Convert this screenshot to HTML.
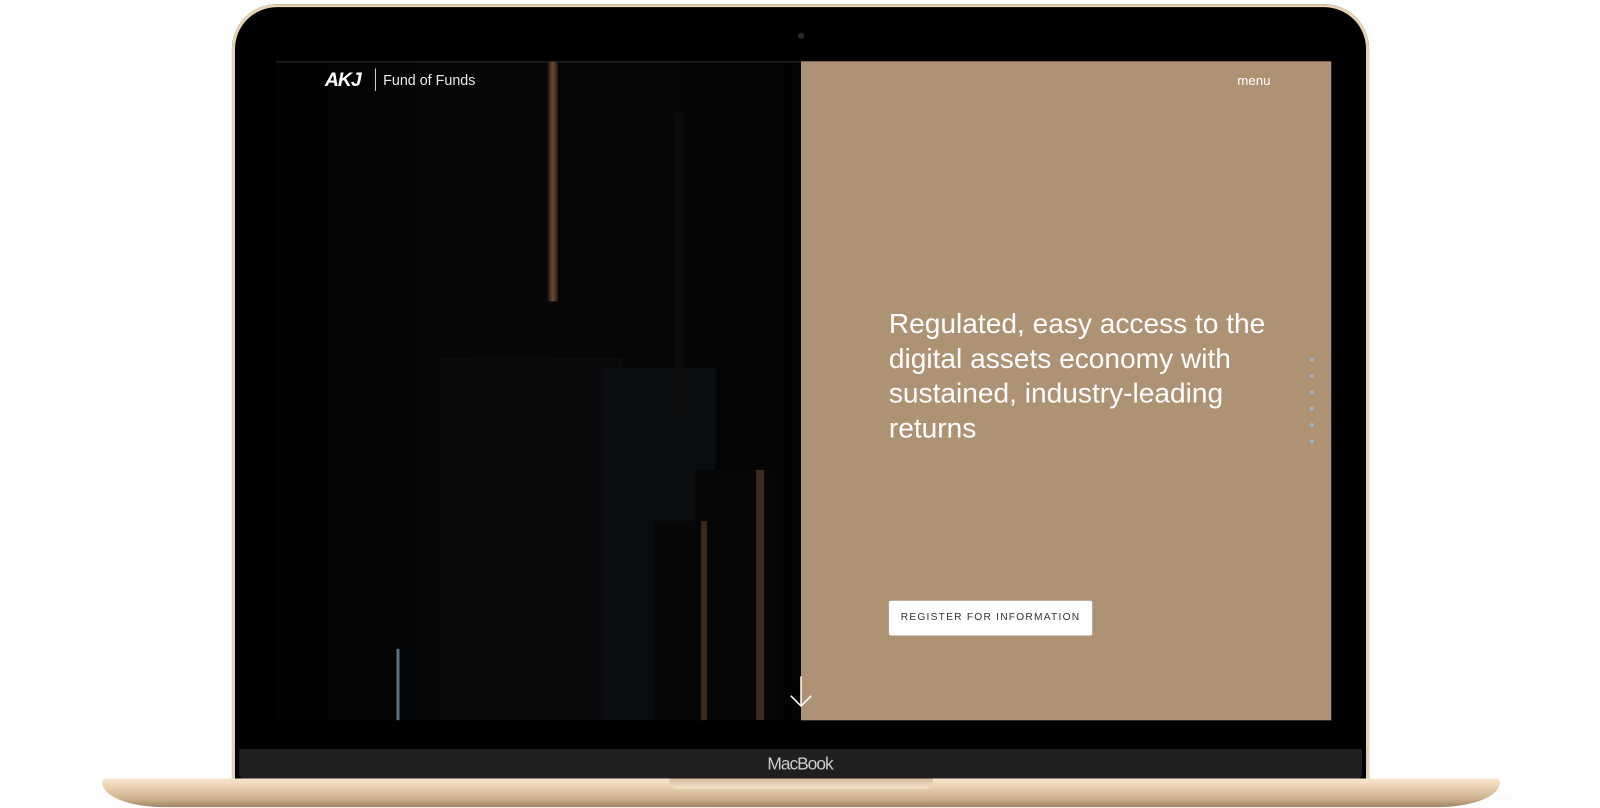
<!DOCTYPE html>
<html><head><style>
body{margin:0;width:1600px;height:808px;background:#fff;position:relative;overflow:hidden;font-family:"Liberation Sans",sans-serif}
#w{position:absolute;left:0;top:0;width:1566px;height:791px;transform:scale(1.02171);transform-origin:0 0}
.abs{position:absolute}
.lid{left:227px;top:4px;width:1113px;height:770px;border-radius:44px 44px 0 0;background:#000;box-shadow:0 0 0 3px #e8d2b4 inset;}
.inner{left:231px;top:8px;width:1105px;height:766px;border-radius:40px 40px 0 0;background:#000}
.dots div{width:4px;height:4px;border-radius:2px;background:#9fb3c4;position:absolute;left:0}
</style></head><body><div id="w">
<div class="abs" style="left:60px;top:770px;width:1480px;height:21px;background:radial-gradient(ellipse at center,#ddd 0%,#fff 70%)"></div>
<div class="abs lid"></div>
<div class="abs inner"></div>
<div class="abs" style="left:781px;top:32px;width:6px;height:6px;border-radius:3px;background:#2a2a2e"></div>
<div class="abs" style="left:270px;top:60px;width:514px;height:645px;background:linear-gradient(90deg,#020202 0%,#060708 40%,#060606 70%,#030303 100%);overflow:hidden">
 <div class="abs" style="left:0;top:0;width:514px;height:1px;background:#333"></div>
 <div class="abs" style="left:266px;top:0;width:10px;height:235px;background:linear-gradient(90deg,#1a120c,#6a4a35,#2a1c12)"></div>
 <div class="abs" style="left:160px;top:290px;width:180px;height:355px;background:#080a0c"></div>
 <div class="abs" style="left:320px;top:300px;width:110px;height:345px;background:#0a0d10"></div>
 <div class="abs" style="left:370px;top:450px;width:90px;height:195px;background:#070708"></div>
 <div class="abs" style="left:410px;top:400px;width:80px;height:245px;background:#060606"></div>
 <div class="abs" style="left:470px;top:400px;width:8px;height:245px;background:#3a2a20"></div>
 <div class="abs" style="left:416px;top:450px;width:6px;height:195px;background:#3a281c"></div>
 <div class="abs" style="left:118px;top:575px;width:3px;height:70px;background:#5a7080"></div>
 <div class="abs" style="left:390px;top:50px;width:10px;height:300px;background:#0a0b0d"></div>
</div>
<div class="abs" style="left:784px;top:60px;width:519px;height:645px;background:#ae9274"></div>
<div class="abs" style="left:318px;top:68px;color:#fff;font-weight:bold;font-size:19px;letter-spacing:-1px;font-style:italic">AKJ</div>
<div class="abs" style="left:367px;top:67px;width:1px;height:22px;background:#ccc"></div>
<div class="abs" style="left:375px;top:70px;color:#e8e8e8;font-size:14px">Fund of Funds</div>
<div class="abs" style="left:1211px;top:71px;color:#fff;font-size:13px">menu</div>
<div class="abs" style="left:870px;top:300px;width:370px;color:#fff;font-size:27.5px;line-height:34px">Regulated, easy access to the digital assets economy with sustained, industry-leading returns</div>
<div class="abs dots" style="left:1282px;top:350px">
 <div style="top:0"></div><div style="top:16px"></div><div style="top:32px"></div><div style="top:48px"></div><div style="top:64px"></div><div style="top:80px"></div>
</div>
<div class="abs" style="left:870px;top:588px;width:199px;height:34px;background:#fff;border-radius:2px;color:#333;font-size:10px;letter-spacing:1.2px;line-height:34px;text-align:center">REGISTER FOR INFORMATION</div>
<svg class="abs" style="left:772px;top:660px" width="24" height="34"><path d="M12 2V31M2 21L12 31L22 21" stroke="#fff" stroke-width="1.5" fill="none"/></svg>
<div class="abs" style="left:234px;top:733px;width:1099px;height:30px;background:#1e1f21;border-radius:0 0 6px 6px"></div>
<div class="abs" style="left:0;width:1566px;top:738px;text-align:center;color:#ccc;font-size:17px;letter-spacing:-1px">MacBook</div>
<div class="abs" style="left:100px;top:762px;width:1368px;height:28px;border-radius:4px 4px 60px 60px/4px 4px 24px 24px;background:linear-gradient(#f7e6cf 0%,#e9d2b2 30%,#c9ab88 75%,#9d8466 100%)"></div>
<div class="abs" style="left:655px;top:762px;width:258px;height:10px;border-radius:0 0 8px 8px;background:linear-gradient(#d8bd99,#f3e2ca)"></div>
</div></body></html>
